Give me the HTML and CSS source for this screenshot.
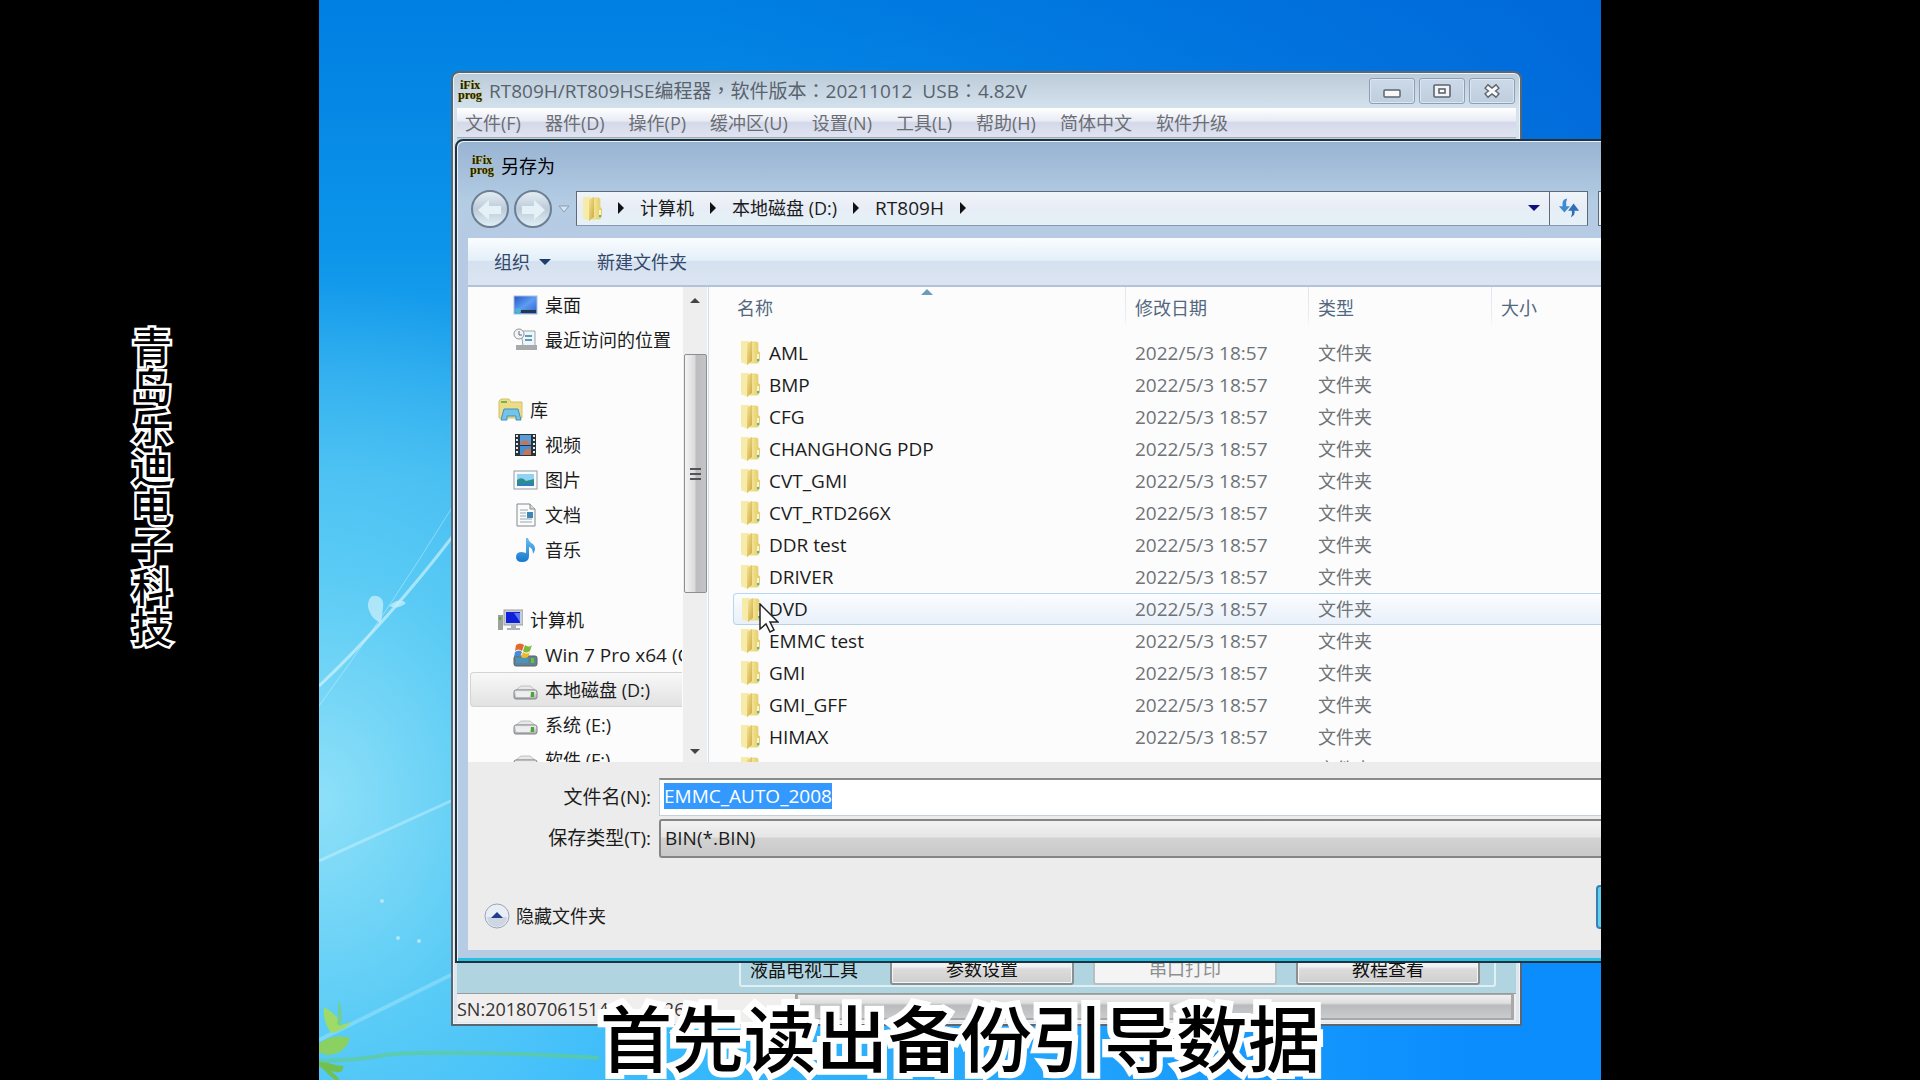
FILE: index.html
```html
<!DOCTYPE html>
<html lang="zh-CN">
<head>
<meta charset="utf-8">
<title>RT809H 编程器 - 另存为</title>
<link rel="stylesheet" href="styles.css">
</head>
<body>
<svg class="defs" aria-hidden="true">
  <defs>
    <linearGradient id="gFolder" x1="0" x2="1" y1="0" y2="0"><stop offset="0" stop-color="#f7eba0"/><stop offset="1" stop-color="#e3c75e"/></linearGradient>
    <linearGradient id="gFold2" x1="0" x2="1" y1="0" y2="1"><stop offset="0" stop-color="#f3e49a"/><stop offset="1" stop-color="#cfa83c"/></linearGradient>
    <linearGradient id="gScreen" x1="0" x2="1" y1="0" y2="1"><stop offset="0" stop-color="#2456c8"/><stop offset=".5" stop-color="#5e9cf2"/><stop offset="1" stop-color="#2a62cf"/></linearGradient>
    <linearGradient id="gDrive" x1="0" x2="0" y1="0" y2="1"><stop offset="0" stop-color="#f4f4f4"/><stop offset="1" stop-color="#a9abad"/></linearGradient>
    <linearGradient id="gOrb" x1="0" x2="0" y1="0" y2="1"><stop offset="0" stop-color="#e6eef5"/><stop offset=".5" stop-color="#bccbd9"/><stop offset="1" stop-color="#e2f0f6"/></linearGradient>
    <linearGradient id="gNote" x1="0" x2="0" y1="0" y2="1"><stop offset="0" stop-color="#6dbdf2"/><stop offset="1" stop-color="#1478cc"/></linearGradient>
  </defs>
  <symbol id="folder" viewBox="0 0 20 25">
    <path d="M10 2h7l1 1v8l2 2v7l-2 3h-8z" fill="url(#gFolder)" stroke="#e6d583" stroke-width=".8"/>
    <path d="M1 1h8v20l-1 4-7-3z" fill="#f3e599"/>
    <path d="M1 1h8l-2 3v20l-6-2z" fill="#f6eba8"/>
    <path d="M7 4l5-3v20l-5 4z" fill="url(#gFold2)"/>
    <path d="M18 14v5" stroke="#f8f4dc" stroke-width="2"/><path d="M18 19v2" stroke="#5fae9c" stroke-width="2"/>
  </symbol>
  <symbol id="drive" viewBox="0 0 25 24">
    <path d="M3 12l5-4h9l5 4z" fill="#e8e8e8" stroke="#b5b5b5" stroke-width=".8"/>
    <rect x="1" y="12" width="23" height="9" rx="2" fill="url(#gDrive)" stroke="#808284"/>
    <rect x="3" y="14" width="14" height="5" rx="1" fill="#eeeeee"/>
    <rect x="18" y="14" width="3" height="5" fill="#45a832"/>
  </symbol>
  <symbol id="fixprog" viewBox="0 0 26 26">
    <g class="logo-shade"><text x="4" y="11">iFix</text><text x="2" y="21">prog</text></g>
    <g class="logo-ink"><text x="3" y="11">iFix</text><text x="1" y="21">prog</text></g>
  </symbol>
</svg>

<div class="frame">
  <aside class="band band-left"><p class="channel">青岛乐迪电子科技</p></aside>

  <main class="desktop">
    <svg class="wallpaper" viewBox="0 0 280 1080" aria-hidden="true">
      <g fill="none" stroke="#e9fbff">
        <path d="M0 686Q68 622 134 536" stroke-width="3" opacity=".55"/>
        <path d="M0 706Q66 616 134 506" stroke-width="1" opacity=".4"/>
        <path d="M0 861L134 800" stroke-width="3" opacity=".35"/>
        <path d="M0 1040L134 974" stroke-width="4" opacity=".25"/>
      </g>
      <g fill="#c9effb" opacity=".75">
        <path d="M49 606c0-8 4-11 8-10 6 1 8 5 7 12l-2 15c-7-3-12-9-13-17z"/><path d="M70 606q10-9 17-3-8 7-17 3z"/>
        <circle cx="63" cy="901" r="2"/><circle cx="79" cy="938" r="2"/><circle cx="100" cy="941" r="2"/>
      </g>
      <path d="M0 1061Q40 1060 60 1056T150 1053T280 1058" fill="none" stroke="#5fcb98" stroke-width="4" opacity=".75"/>
      <g fill="#9edb68">
        <path d="M5 1007c10 6 15 11 17 18l11-3c-6 6-12 9-21 11-6-9-8-17-7-26z"/><path d="M18 1024c2-8 0-16 2-24 3 10 3 18 2 26z" fill="#72cf8f"/>
        <path d="M0 1044c6-6 18-10 31-6-4 12-12 17-24 17l-7-3z" fill="#8ad162"/>
        <path d="M0 1062c10 0 16 4 25 4l-2 5c-5 3-8 0-11 0 4 4 8 6 8 9h-4c-6-4-10-10-16-14z" fill="#72c050"/>
      </g>
    </svg>

    <section class="app" aria-label="RT809H">
      <header class="app-title">
        <svg class="logo"><use href="#fixprog"/></svg>
        <h1 class="app-name">RT809H/RT809HSE编程器<span class="mark" lang="zh-TW">，</span>软件版本<span class="mark" lang="zh-TW">：</span>20211012&nbsp; USB<span class="mark" lang="zh-TW">：</span>4.82V</h1>
        <div class="caption">
          <button class="cap" aria-label="最小化"><svg viewBox="0 0 18 18"><rect x="1" y="8" width="16" height="7" rx="1" fill="#f8f8f8" stroke="#5c6470" stroke-width="1.5"/></svg></button>
          <button class="cap" aria-label="最大化"><svg viewBox="0 0 18 18"><rect x="1" y="3" width="16" height="12" rx="1" fill="#f4f4f4" stroke="#5c6470" stroke-width="1.6"/><rect x="6" y="7" width="6" height="4" fill="#fff" stroke="#5c6470" stroke-width="1.6"/></svg></button>
          <button class="cap" aria-label="关闭"><svg viewBox="0 0 18 18"><path d="M3 4l12 10M15 4L3 14" stroke="#5c6470" stroke-width="6"/><path d="M4 5l10 8M14 5L4 13" stroke="#f8f8f8" stroke-width="3"/></svg></button>
        </div>
      </header>
      <nav class="menu">
        <button>文件(F)</button><button>器件(D)</button><button>操作(P)</button><button>缓冲区(U)</button><button>设置(N)</button><button>工具(L)</button><button>帮助(H)</button><button>简体中文</button><button>软件升级</button>
      </nav>
      <div class="app-body">
        <div class="tools">
          <span class="tools-label">液晶电视工具</span>
          <button class="tool">参数设置</button><button class="tool" disabled>串口打印</button><button class="tool">教程查看</button>
        </div>
      </div>
      <footer class="status"><span class="serial">SN:20180706151421 &nbsp; 1626</span><span class="progress"></span></footer>
    </section>

    <section class="dialog" role="dialog" aria-labelledby="dlg-title">
      <header class="dlg-title"><svg class="logo"><use href="#fixprog"/></svg><h2 id="dlg-title">另存为</h2></header>
      <div class="nav">
        <div class="orbs">
          <button class="orb" aria-label="后退"><svg viewBox="0 0 40 40"><circle cx="20" cy="20" r="18" fill="url(#gOrb)" stroke="#6c7f92" stroke-width="2"/><path d="M8 21l11-10v6h12v8H19v6z" fill="#e4f1f6"/></svg></button>
          <button class="orb" aria-label="前进"><svg viewBox="0 0 40 40"><circle cx="20" cy="20" r="18" fill="url(#gOrb)" stroke="#6c7f92" stroke-width="2"/><path d="M32 21L21 11v6H9v8h12v6z" fill="#e4f1f6"/></svg></button>
          <svg class="history" viewBox="0 0 12 8"><path d="M1 1h10L6 7z" fill="#d8e4ef" stroke="#8a9cb2"/></svg>
        </div>
        <div class="address">
          <svg class="folder"><use href="#folder"/></svg>
          <i class="tri"></i><a href="#pc">计算机</a><i class="tri"></i><a href="#d">本地磁盘 (D:)</a><i class="tri"></i><a href="#rt">RT809H</a><i class="tri"></i>
          <button class="drop" aria-label="历史记录"><i class="tri-down"></i></button>
          <button class="refresh" aria-label="刷新"><svg viewBox="0 0 24 24"><path d="M9 2q-5 1-4 8H1l6 7 6-7H9q-1-4 1-8z" fill="#3f8ad0"/><path d="M14 22q5-2 4-7h5l-6-8-6 8h4q1 3-1 7z" fill="#2f6fb4"/></svg></button>
        </div>
        <input class="search" type="text" aria-label="搜索">
      </div>
      <div class="toolbar"><button>组织<i class="tri-down"></i></button><button>新建文件夹</button></div>

      <div class="browser">
        <div class="tree">
          <ul>
            <li class="sub"><svg viewBox="0 0 25 24"><rect x="1" y="3" width="23" height="18" fill="url(#gScreen)" stroke="#a9c0d8"/><path d="M2 17h21v3H2z" fill="#26364f"/><circle cx="5" cy="18" r="3" fill="#4bb4d8"/></svg>桌面</li>
            <li class="sub"><svg viewBox="0 0 25 24"><path d="M8 3h14v15H10z" fill="#eef4f7" stroke="#9aa5ac"/><path d="M12 8h7M12 12h7" stroke="#5e9db5" stroke-width="2"/><path d="M3 17h21v5H3z" fill="#a6aaac"/><circle cx="6" cy="6" r="5" fill="#f2f5f6" stroke="#8d969c"/><path d="M6 3v4h3" fill="none" stroke="#667"/></svg>最近访问的位置</li>
            <li class="gap"></li>
            <li><svg viewBox="0 0 25 24"><path d="M1 3l2-2h8l2 3h11v16H1z" fill="#eddb85" stroke="#d4c06a"/><path d="M3 4h6" stroke="#6cb84c" stroke-width="2"/><path d="M3 22l3-11h14l3 11h-5v-4H9v4z" fill="#74c3e8" stroke="#3b92bd"/></svg>库</li>
            <li class="sub"><svg viewBox="0 0 25 24"><rect x="2" y="1" width="21" height="22" fill="#27323a"/><rect x="7" y="2" width="11" height="10" fill="#5b9bd6"/><rect x="7" y="13" width="11" height="9" fill="#4a8cd0"/><path d="M7 11q5-8 11 1M9 22q4-9 9-5v5z" fill="#c0765a"/><path d="M4 2v20M21 2v20" stroke="#e3eaee" stroke-width="2" stroke-dasharray="2 2"/></svg>视频</li>
            <li class="sub"><svg viewBox="0 0 25 24"><rect x="1" y="3" width="23" height="18" fill="#fafafa" stroke="#8f9ba3"/><rect x="4" y="6" width="17" height="12" fill="#8fd2f3"/><path d="M4 12q5-4 9 1l8-2v7H4z" fill="#2b8f86"/><path d="M4 15h17v3H4z" fill="#2d7fbf"/></svg>图片</li>
            <li class="sub"><svg viewBox="0 0 25 24"><path d="M4 1h13l5 5v17H4z" fill="#fafbfb" stroke="#84898d"/><path d="M17 1v5h5" fill="#ddd" stroke="#84898d"/><path d="M7 7h8M7 10h6M7 13h6M7 16h12M7 19h12" stroke="#9aa5ac"/><rect x="14" y="9" width="6" height="6" fill="#3c87b8"/></svg>文档</li>
            <li class="sub"><svg viewBox="0 0 25 24"><path d="M13 0h2q1 4 5 6 4 4 0 10 0-6-4-7v9q0 6-7 6-6 0-6-5 0-5 6-5l4 1z" fill="url(#gNote)"/></svg>音乐</li>
            <li class="gap"></li>
            <li><svg viewBox="0 0 25 24"><rect x="6" y="2" width="19" height="15" fill="#c9ccd0" stroke="#9b9fa4"/><rect x="8" y="4" width="14" height="11" fill="#1020d8"/><path d="M16 5h6v9z" fill="#5a78f0"/><path d="M13 17h5v3h4v2H9v-2h4z" fill="#aeb1b5"/><rect x="0" y="7" width="5" height="15" fill="#9da29f"/><path d="M2 9v3" stroke="#4bb52c" stroke-width="2"/></svg>计算机</li>
            <li class="sub latin"><svg viewBox="0 0 25 24"><rect x="1" y="13" width="23" height="10" rx="2" fill="#66808f" stroke="#55646e"/><rect x="3" y="15" width="12" height="5" fill="#4a93ba"/><rect x="18" y="15" width="3" height="5" fill="#58c83c"/><path d="M3 2q4-3 8 0l-2 6q-4-3-7 0z" fill="#e0692b"/><path d="M12 2q4 3 7 0l-2 6q-4 3-7 0z" fill="#7cb83a"/><path d="M2 9q4-3 7 0l-2 5q-3-2-6 0z" fill="#4a8ad4"/><path d="M10 9q4 3 7 0l-2 5q-4 2-7 0z" fill="#efb92c"/></svg>Win 7 Pro x64 (C:)</li>
            <li class="sub selected"><svg><use href="#drive"/></svg>本地磁盘 (D:)</li>
            <li class="sub"><svg><use href="#drive"/></svg>系统 (E:)</li>
            <li class="sub"><svg><use href="#drive"/></svg>软件 (F:)</li>
          </ul>
          <div class="scroll"><i class="tri-up"></i><div class="thumb"><i></i><i></i><i></i></div><i class="tri-down"></i></div>
        </div>
        <div class="files">
          <table>
            <colgroup><col class="c-name"><col class="c-date"><col class="c-type"><col></colgroup>
            <thead><tr><th><i class="sort"></i>名称</th><th>修改日期</th><th>类型</th><th>大小</th></tr></thead>
            <tbody>
              <tr><td><svg class="folder"><use href="#folder"/></svg>AML</td><td>2022/5/3 18:57</td><td>文件夹</td><td></td></tr>
              <tr><td><svg class="folder"><use href="#folder"/></svg>BMP</td><td>2022/5/3 18:57</td><td>文件夹</td><td></td></tr>
              <tr><td><svg class="folder"><use href="#folder"/></svg>CFG</td><td>2022/5/3 18:57</td><td>文件夹</td><td></td></tr>
              <tr><td><svg class="folder"><use href="#folder"/></svg>CHANGHONG PDP</td><td>2022/5/3 18:57</td><td>文件夹</td><td></td></tr>
              <tr><td><svg class="folder"><use href="#folder"/></svg>CVT_GMI</td><td>2022/5/3 18:57</td><td>文件夹</td><td></td></tr>
              <tr><td><svg class="folder"><use href="#folder"/></svg>CVT_RTD266X</td><td>2022/5/3 18:57</td><td>文件夹</td><td></td></tr>
              <tr><td><svg class="folder"><use href="#folder"/></svg>DDR test</td><td>2022/5/3 18:57</td><td>文件夹</td><td></td></tr>
              <tr><td><svg class="folder"><use href="#folder"/></svg>DRIVER</td><td>2022/5/3 18:57</td><td>文件夹</td><td></td></tr>
              <tr class="hover"><td><svg class="folder"><use href="#folder"/></svg>DVD<svg class="cursor" viewBox="0 0 20 30"><path d="M1 1v25l6-5 4 8 4-2-4-8h8z" fill="#fff" stroke="#222" stroke-width="1.5"/></svg></td><td>2022/5/3 18:57</td><td>文件夹</td><td></td></tr>
              <tr><td><svg class="folder"><use href="#folder"/></svg>EMMC test</td><td>2022/5/3 18:57</td><td>文件夹</td><td></td></tr>
              <tr><td><svg class="folder"><use href="#folder"/></svg>GMI</td><td>2022/5/3 18:57</td><td>文件夹</td><td></td></tr>
              <tr><td><svg class="folder"><use href="#folder"/></svg>GMI_GFF</td><td>2022/5/3 18:57</td><td>文件夹</td><td></td></tr>
              <tr><td><svg class="folder"><use href="#folder"/></svg>HIMAX</td><td>2022/5/3 18:57</td><td>文件夹</td><td></td></tr>
              <tr><td><svg class="folder"><use href="#folder"/></svg>philips</td><td>2022/5/3 18:57</td><td>文件夹</td><td></td></tr>
            </tbody>
          </table>
        </div>
      </div>

      <form class="save">
        <div class="field"><label for="fname">文件名(N):</label><div class="box"><input id="fname" type="text" value="EMMC_AUTO_2008"></div></div>
        <div class="field"><label for="ftype">保存类型(T):</label><select id="ftype"><option>BIN(*.BIN)</option></select></div>
        <div class="actions">
          <button type="button" class="hide"><svg viewBox="0 0 26 26"><circle cx="13" cy="13" r="12" fill="#e9eef6" stroke="#98a6b8"/><path d="M3 14a10 10 0 0 0 20 0z" fill="#cdd6e2"/><path d="M7 15l6-6 6 6z" fill="#1f3f8c"/></svg>隐藏文件夹</button>
          <button type="button" class="ok" aria-label="保存"></button>
        </div>
      </form>
    </section>

    <p class="subtitle">首先读出备份引导数据</p>
  </main>
  <aside class="band"></aside>
</div>
</body>
</html>
```
FILE: styles.css
```css
* { box-sizing: border-box; }
body { margin: 0; background: #000; font: 18px/24px "Open Sans", "Noto Sans CJK SC", sans-serif; color: #1c1c1c; }
button, input, select { font: inherit; color: inherit; margin: 0; padding: 0; border: 0; background: none; border-radius: 0; }
h1, h2, p, ul { margin: 0; padding: 0; font-size: inherit; font-weight: 400; list-style: none; }
svg { display: block; flex: none; }
.defs { position: absolute; width: 0; height: 0; }

.frame { display: grid; grid-template-columns: 319px minmax(0, 1fr) 319px; height: 100vh; min-height: 1080px; overflow: hidden; }
.band { background: #000; }
.band-left { display: flex; justify-content: center; align-items: flex-start; padding: 327px 15px 0 0; }
.channel { writing-mode: vertical-rl; font-family: "Noto Sans CJK SC", sans-serif; font-size: 40px; font-weight: 500; line-height: 44px; color: #000; -webkit-text-stroke: 5px #fff; paint-order: stroke fill; }

.desktop { position: relative; overflow: hidden; background:
  radial-gradient(ellipse 420px 520px at 0 800px, #8ee0f8 0, rgba(98, 208, 245, .8) 45%, rgba(60, 190, 250, 0) 100%),
  linear-gradient(90deg, rgba(0, 130, 255, 0) 30%, rgba(0, 130, 255, .8) 90%) 0 100% / 100% 480px no-repeat,
  linear-gradient(90deg, rgba(0, 100, 220, 0) 30%, rgba(0, 95, 215, .7) 100%) 0 0 / 100% 600px no-repeat,
  linear-gradient(#007fe2 0, #0c95ea 250px, #35b2f0 480px, #35b8fc 1080px); }
.wallpaper { position: absolute; left: 0; top: 0; width: 280px; height: 1080px; }

.app { position: absolute; left: 132px; top: 71px; width: 1071px; height: 955px; display: flex; flex-direction: column; padding: 0 4px 2px; border: 2px solid #5a6672; border-radius: 8px 8px 0 0; background: linear-gradient(#bccbd8, #d4e2ee 36px, #dfe6ee); box-shadow: inset 0 0 0 1px #eef3f8; }
.app-title { display: flex; align-items: center; height: 35px; color: #59636e; }
.logo { width: 26px; height: 26px; margin-right: 6px; }
.logo-ink, .logo-shade { font: 700 12px "Liberation Serif", serif; fill: #23210c; }
.logo-shade { fill: #c8c02c; }
.app-name { flex: 1; font-size: 19px; white-space: nowrap; }
.mark { font-family: "Noto Sans CJK TC", sans-serif; }
.caption { display: flex; gap: 4px; margin-right: 1px; }
.cap { display: grid; place-items: center; width: 46px; height: 26px; border: 1px solid #8c9fb8; border-radius: 3px; background: linear-gradient(#ccd9e8, #bfcede); box-shadow: inset 0 0 0 1px #dde7f1; }
.cap svg { width: 18px; height: 18px; }
.menu { display: flex; gap: 24px; height: 30px; padding: 0 8px; background: linear-gradient(#fff, #e8ebf5 45%, #d4d9e9 50%, #e0e3f1); border-bottom: 1px solid #a5a9b4; color: #6b6e73; }
.menu button { white-space: nowrap; }
.app-body { flex: 1; display: flex; align-items: flex-end; justify-content: flex-end; padding: 0 20px 6px; background: #b0d5e1; }
.tools { display: flex; align-items: flex-end; width: 757px; height: 60px; border: 2px solid #dff0f5; border-radius: 3px; color: #111; }
.tools-label { width: 149px; padding-left: 9px; line-height: 30px; }
.tool { width: 184px; height: 32px; margin-right: 19px; border: 2px solid #8b8f92; border-radius: 3px; background: linear-gradient(#f2f2f2 40%, #dcdcdc 50%, #cfcfcf); box-shadow: inset 0 0 0 1px #f5f5f5; }
.tool:disabled { color: #8d8f90; border-color: #b6c0c4; background: #f4f4f4; }
.tool:last-child { margin-right: 0; }
.status { display: flex; height: 29px; background: #f1eeee; border-top: 1px solid #9a9a9a; color: #333; }
.serial { width: 340px; line-height: 30px; white-space: nowrap; border-right: 2px solid #a2a2a2; }
.progress { flex: 1; margin: 0 2px 2px 0; border: 1px solid #a8a8a8; border-right-width: 3px; border-bottom-width: 2px; background: linear-gradient(#f0f0f0, #dedede 35%, #b9bbbc 45%, #c9cbcc); }

.dialog { position: absolute; left: 136px; top: 139px; width: 1500px; height: 824px; display: flex; flex-direction: column; padding: 0 11px 11px; border: 2px solid #23313f; border-radius: 8px 8px 0 0; background: linear-gradient(#98b3d2, #b3cce4 60px, #b6cbe3 100px, #b6cce4); box-shadow: inset 1px 1px 0 #e8f1f8, inset 0 -3px 0 #27c0e0; }
.dlg-title { display: flex; align-items: center; height: 50px; padding-left: 1px; color: #000; }
.nav { display: flex; align-items: flex-start; height: 47px; }
.orbs { display: flex; align-items: center; width: 108px; height: 36px; gap: 3px; padding-left: 2px; }
.orb { width: 40px; height: 40px; }
.orb svg { width: 40px; height: 40px; }
.history { width: 12px; height: 8px; margin-left: 2px; }
.address { display: flex; align-items: center; width: 1012px; height: 35px; padding: 0 0 1px 5px; border: 1px solid #5f6a76; border-bottom-color: #8798aa; background: linear-gradient(#f0f5fa, #e8edf6 45%, #e4f1f7); }
.folder { width: 20px; height: 25px; }
.tri { margin: 0 16px; border: 6px solid transparent; border-left-color: #111; border-right-width: 0; }
.tri-down { display: block; border: 6px solid transparent; border-top-color: #10107c; border-bottom-width: 0; }
.address a { color: #1c1c1c; text-decoration: none; white-space: nowrap; line-height: 22px; }
.address a:last-of-type { font-size: 19px; }
.drop { margin-left: auto; padding: 0 9px; }
.refresh { display: grid; place-items: center; width: 38px; height: 33px; border-left: 1px solid #5f6a76; }
.refresh svg { width: 22px; height: 22px; }
.search { width: 300px; height: 35px; margin-left: 10px; border: 1px solid #5f6a76; background: #e8eff6; }
.toolbar { display: flex; align-items: center; gap: 46px; height: 49px; padding-left: 26px; border-bottom: 2px solid #b0c3da; background: linear-gradient(#fafdff, #e3eff8 48%, #d6e1ef 50%, #dbe5f2); color: #33486a; }
.toolbar button { display: flex; align-items: center; gap: 9px; white-space: nowrap; }
.toolbar .tri-down { border-top-color: #1e3c6c; }

.browser { display: flex; height: 475px; background: #fcfcfc; overflow: hidden; }
.tree { display: flex; width: 241px; border-right: 1px solid #cfdeeb; }
.tree ul { width: 214px; height: 475px; overflow: hidden; }
.tree li { display: flex; align-items: center; gap: 7px; height: 35px; padding-left: 30px; white-space: nowrap; }
.tree li.sub { padding-left: 45px; }
.tree li.latin { font-size: 19px; }
.tree li svg { width: 25px; height: 24px; }
.tree li.selected { margin-left: 2px; padding-left: 42px; border: 1px solid #d4d4d4; border-right: 0; border-radius: 4px 0 0 4px; background: linear-gradient(#f8f8f8, #e2e2e2); }
.scroll { display: flex; flex-direction: column; align-items: center; width: 24px; margin-left: 1px; padding: 11px 0 8px; background: #eeeeee; }
.tri-up { display: block; border: 5px solid transparent; border-bottom-color: #444; border-top-width: 0; }
.scroll .tri-down { border-width: 5px 5px 0; border-top-color: #444; margin-top: auto; }
.thumb { display: flex; flex-direction: column; justify-content: center; align-items: center; gap: 3px; width: 23px; height: 239px; margin-top: 51px; border: 1px solid #8e8e8e; border-radius: 2px; background: linear-gradient(90deg, #f4f4f4, #dcdcdc 45%, #bdbdbf 55%, #c4c4c6); }
.thumb i { width: 11px; height: 2px; background: #555; }

.files { flex: 1; padding-left: 24px; }
table { width: 100%; border-collapse: separate; border-spacing: 0; table-layout: fixed; }
.c-name { width: 393px; } .c-date, .c-type { width: 183px; }
th { position: relative; height: 50px; padding: 0 0 9px 9px; text-align: left; font-weight: 400; color: #53687f; background: linear-gradient(#dfe6ee, #e8edf2 30px, #fcfcfc 40px) right top / 1px 40px no-repeat; }
th:first-child { padding-left: 4px; }
.sort { position: absolute; left: 188px; top: 2px; border: 6px solid transparent; border-bottom-color: #6d9cba; border-top-width: 0; }
td { height: 32px; padding: 0 0 0 9px; color: #6f7377; white-space: nowrap; }
td:nth-child(2) { font-size: 19px; }
td:first-child { color: #1c1c1c; position: relative; padding-left: 36px; font-size: 19px; }
td .folder { position: absolute; left: 7px; top: 3px; }
.hover td { background: linear-gradient(#fbfdff, #e9f0f9); border-top: 1px solid #b5d8f0; border-bottom: 1px solid #b9cfe2; }
.hover td:first-child { border-left: 1px solid #b5d8f0; border-radius: 4px 0 0 4px; padding-left: 35px; }
td .cursor { position: absolute; left: 25px; top: 9px; width: 20px; height: 30px; }

.save { flex: 1; padding-top: 16px; background: #ececec; }
.field { display: flex; align-items: center; height: 38px; margin-bottom: 3px; font-size: 19px; }
.field label { width: 191px; padding-right: 8px; text-align: right; white-space: nowrap; }
.box { flex: 1; display: flex; height: 38px; padding: 3px 4px; border: 1px solid #c5d0d8; border-top: 2px solid #8a8a8a; background: #fff; }
.box input { field-sizing: content; height: 26px; background: #3399ff; color: #fff; }
.field select { flex: 1; height: 39px; padding: 0 4px; appearance: none; border: 2px solid #858585; border-radius: 3px; background: linear-gradient(#f2f2f2, #e6e6e6 45%, #d2d2d2 50%, #c9c9c9); }
.actions { display: flex; align-items: flex-end; justify-content: space-between; height: 44px; margin-top: 28px; padding-left: 16px; }
.hide { display: flex; align-items: center; gap: 6px; }
.hide svg { width: 26px; height: 26px; }
.ok { width: 346px; height: 44px; border: 2px solid #3c7fb1; border-radius: 4px; background: #5fd0f0; }

.subtitle { position: absolute; left: 0; right: 0; bottom: 3px; text-align: center; white-space: nowrap; font: 500 72px/84px "Noto Sans CJK SC", sans-serif; color: #000; -webkit-text-stroke: 12px #fff; paint-order: stroke fill; }
```
